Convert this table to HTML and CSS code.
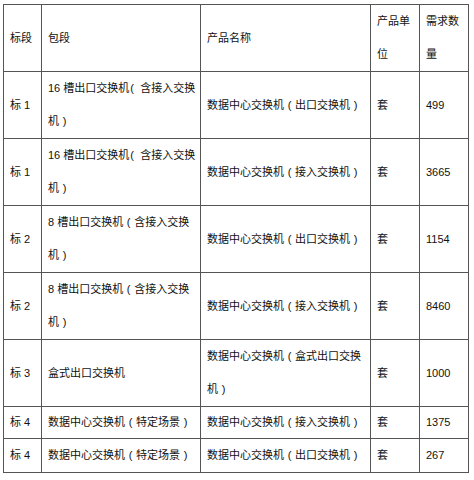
FILE: index.html
```html
<!DOCTYPE html>
<html lang="zh-CN">
<head>
<meta charset="utf-8">
<title>采购需求</title>
<link rel="stylesheet" href="styles.css">
</head>
<body>
<div class="wrap">
<table class="req">
  <colgroup>
    <col class="c-bid">
    <col class="c-pkg">
    <col class="c-name">
    <col class="c-unit">
    <col class="c-qty">
  </colgroup>
  <tr>
    <td>标段</td>
    <td>包段</td>
    <td>产品名称</td>
    <td>产品单<br>位</td>
    <td>需求数<br>量</td>
  </tr>
  <tr>
    <td>标 1</td>
    <td>16 槽出口交换机<span class="bk bk-l">(</span>含接入交换<br>机<span class="bk">)</span></td>
    <td>数据中心交换机<span class="bk">(</span>出口交换机<span class="bk">)</span></td>
    <td>套</td>
    <td>499</td>
  </tr>
  <tr>
    <td>标 1</td>
    <td>16 槽出口交换机<span class="bk bk-l">(</span>含接入交换<br>机<span class="bk">)</span></td>
    <td>数据中心交换机<span class="bk">(</span>接入交换机<span class="bk">)</span></td>
    <td>套</td>
    <td>3665</td>
  </tr>
  <tr>
    <td>标 2</td>
    <td>8 槽出口交换机<span class="bk">(</span>含接入交换<br>机<span class="bk">)</span></td>
    <td>数据中心交换机<span class="bk">(</span>出口交换机<span class="bk">)</span></td>
    <td>套</td>
    <td>1154</td>
  </tr>
  <tr>
    <td>标 2</td>
    <td>8 槽出口交换机<span class="bk">(</span>含接入交换<br>机<span class="bk">)</span></td>
    <td>数据中心交换机<span class="bk">(</span>接入交换机<span class="bk">)</span></td>
    <td>套</td>
    <td>8460</td>
  </tr>
  <tr>
    <td>标 3</td>
    <td>盒式出口交换机</td>
    <td>数据中心交换机<span class="bk">(</span>盒式出口交换<br>机<span class="bk">)</span></td>
    <td>套</td>
    <td>1000</td>
  </tr>
  <tr class="r-short">
    <td>标 4</td>
    <td>数据中心交换机<span class="bk">(</span>特定场景<span class="bk">)</span></td>
    <td>数据中心交换机<span class="bk">(</span>接入交换机<span class="bk">)</span></td>
    <td>套</td>
    <td>1375</td>
  </tr>
  <tr>
    <td>标 4</td>
    <td>数据中心交换机<span class="bk">(</span>特定场景<span class="bk">)</span></td>
    <td>数据中心交换机<span class="bk">(</span>出口交换机<span class="bk">)</span></td>
    <td>套</td>
    <td>267</td>
  </tr>
</table>
</div>
</body>
</html>
```

FILE: styles.css
```css
html, body {
  margin: 0;
  padding: 0;
  background: #ffffff;
}

.wrap {
  padding: 4px 0 0 3px;
}

.req {
  border-collapse: collapse;
  table-layout: fixed;
  width: 465px;
  font-family: "Liberation Sans", "Noto Sans CJK SC", sans-serif;
  font-size: 11px;
  line-height: 33px;
  color: #111111;
}

.req td {
  border: 1px solid #555555;
  padding: 0 2px 0 6px;
  vertical-align: middle;
  text-align: left;
  white-space: nowrap;
  overflow: hidden;
}

.req .r-short td {
  line-height: 31px;
}

.bk {
  display: inline-block;
  width: 11px;
  text-align: center;
}

.bk-l {
  text-align: left;
  padding-left: 1px;
  width: 10px;
}

.c-bid { width: 38px; }
.c-pkg { width: 159px; }
.c-name { width: 170px; }
.c-unit { width: 49px; }
.c-qty { width: 49px; }
```
